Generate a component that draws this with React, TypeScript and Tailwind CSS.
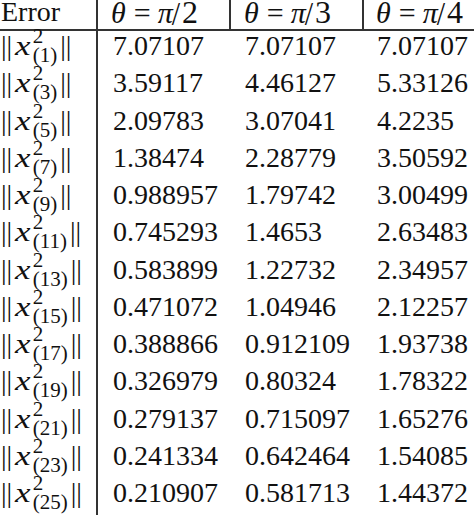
import React from "react";

const rows: [string, string, string, string][] = [
  ["1", "7.07107", "7.07107", "7.07107"],
  ["3", "3.59117", "4.46127", "5.33126"],
  ["5", "2.09783", "3.07041", "4.2235"],
  ["7", "1.38474", "2.28779", "3.50592"],
  ["9", "0.988957", "1.79742", "3.00499"],
  ["11", "0.745293", "1.4653", "2.63483"],
  ["13", "0.583899", "1.22732", "2.34957"],
  ["15", "0.471072", "1.04946", "2.12257"],
  ["17", "0.388866", "0.912109", "1.93738"],
  ["19", "0.326979", "0.80324", "1.78322"],
  ["21", "0.279137", "0.715097", "1.65276"],
  ["23", "0.241334", "0.642464", "1.54085"],
  ["25", "0.210907", "0.581713", "1.44372"],
];

function Label({ n }: { n: string }) {
  return (
    <div className="flex items-baseline pl-[1px]">
      <span>||</span>
      <span className="italic ml-[3px] inline-block scale-x-[1.25] origin-left">x</span>
      <span className="inline-flex flex-col text-[21px] leading-[19px] ml-[5px] -translate-y-[12px]">
        <span>2</span>
        <span>({n})</span>
      </span>
      <span className="ml-[3px]">||</span>
    </div>
  );
}

function Theta({ d }: { d: string }) {
  return (
    <span className="flex items-baseline text-[30px]">
      <span className="italic">θ</span>
      <span className="ml-[8px]">=</span>
      <span className="italic ml-[7px]">π</span>
      <span className="ml-[-1px] inline-block scale-y-[1.15]">/</span>
      <span className="ml-[2px] text-[32px]">{d}</span>
    </span>
  );
}

export default function App() {
  return (
    <div
      className="w-[474px] h-[515px] bg-white text-[#111] overflow-hidden text-[28px] leading-none"
      style={{ fontFamily: '"Liberation Serif", "DejaVu Serif", serif' }}
    >
      <div className="grid grid-cols-[98px_133px_133px_110px]">
        <div className="h-[31px] border-r-[2px] border-b-[2px] border-[#333] flex items-end pb-[3px] pl-[1px]">
          Error
        </div>
        <div className="h-[31px] border-r-[2px] border-b-[2px] border-[#333] flex items-end pb-[1px] pl-[13px]">
          <Theta d="2" />
        </div>
        <div className="h-[31px] border-r-[2px] border-b-[2px] border-[#333] flex items-end pb-[1px] pl-[13px]">
          <Theta d="3" />
        </div>
        <div className="h-[31px] border-b-[2px] border-[#333] flex items-end pb-[1px] pl-[12px]">
          <Theta d="4" />
        </div>
        {rows.map((r) => (
          <React.Fragment key={r[0]}>
            <div className="h-[37.25px] border-r-[2px] border-[#333] flex items-start pt-[1px]">
              <Label n={r[0]} />
            </div>
            <div className="h-[37.25px] flex items-start pt-[1px] pl-[15px]">{r[1]}</div>
            <div className="h-[37.25px] flex items-start pt-[1px] pl-[14px]">{r[2]}</div>
            <div className="h-[37.25px] flex items-start pt-[1px] pl-[13px]">{r[3]}</div>
          </React.Fragment>
        ))}
      </div>
    </div>
  );
}
